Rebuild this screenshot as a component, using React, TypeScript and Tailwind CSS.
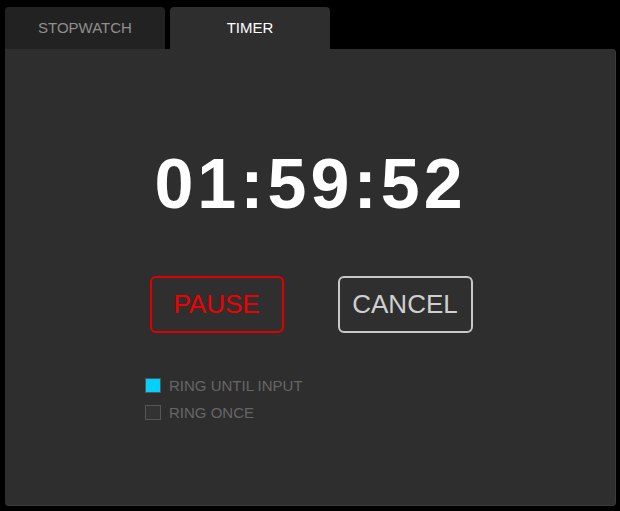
import React from "react";

export default function App() {
  return (
    <div
      className="w-[620px] h-[511px] bg-black pt-[7px] pl-[5px] overflow-hidden"
      style={{ fontFamily: '"Liberation Sans", Arial, sans-serif' }}
    >
      <div className="flex gap-[5px]">
        <div className="w-[160px] h-[42px] bg-[#222222] rounded-t-[4px] flex items-center justify-center text-[15px] text-[#8f8f8f] pt-[1px]">
          STOPWATCH
        </div>
        <div className="w-[160px] h-[42px] bg-[#2e2e2e] rounded-t-[4px] flex items-center justify-center text-[15px] text-white pt-[1px]">
          TIMER
        </div>
      </div>
      <div className="w-[611px] h-[457px] bg-[#2e2e2e] rounded-tr-[4px] rounded-b-[4px] border-r border-b border-[#3a3a3a] flex flex-col">
        <div className="mt-[100px] text-center text-white font-bold text-[70px] leading-[70px] tracking-[4px] pl-[1px]">
          01:59:52
        </div>
        <div className="mt-[57px] flex justify-center gap-[54px] pl-[2px]">
          <button className="w-[134px] h-[57px] border-2 border-[#e00000] rounded-[6px] text-[#f00000] text-[26px] flex items-center justify-center bg-[#2f2f2f]">
            PAUSE
          </button>
          <button className="w-[135px] h-[57px] border-2 border-[#c8c8c8] rounded-[6px] text-[#cfcfcf] text-[26px] flex items-center justify-center bg-[#2f2f2f]">
            CANCEL
          </button>
        </div>
        <div className="mt-[45px] pl-[140px] flex flex-col gap-[12px]">
          <div className="flex items-center gap-[8px] h-[15px]">
            <div className="w-[16px] h-[15px] border border-[#555555] bg-[#00d2ff]" />
            <span className="text-[15px] leading-[15px] text-[#666666]">RING UNTIL INPUT</span>
          </div>
          <div className="flex items-center gap-[8px] h-[15px]">
            <div className="w-[16px] h-[15px] border border-[#555555] bg-[#333333]" />
            <span className="text-[15px] leading-[15px] text-[#666666]">RING ONCE</span>
          </div>
        </div>
      </div>
    </div>
  );
}
